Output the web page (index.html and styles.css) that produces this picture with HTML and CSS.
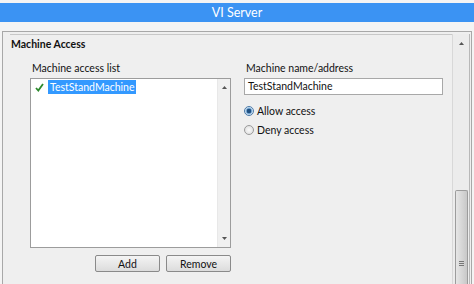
FILE: index.html
```html
<!DOCTYPE html>
<html>
<head>
<meta charset="utf-8">
<link rel="stylesheet" href="styles.css">
</head>
<body>
<div class="titlebar">VI Server</div>
<div class="window">
  <div class="frame">
    <div class="content">
      <div class="heading">Machine Access</div>
      <div class="cols">
        <div class="left">
          <div class="label">Machine access list</div>
          <div class="listbox">
            <div class="items">
              <div class="item">
                <svg class="check" width="9" height="9" viewBox="0 0 9 9"><path d="M1 5 L3.3 7.5 L8 1" fill="none" stroke="#2d8a2d" stroke-width="1.8"/></svg>
                <span class="sel">TestStandMachine</span>
              </div>
            </div>
            <div class="mini-scroll">
              <svg width="5" height="3" viewBox="0 0 5 3"><path d="M0 3 L2.5 0 L5 3Z" fill="#555"/></svg>
              <svg width="5" height="3" viewBox="0 0 5 3"><path d="M0 0 L2.5 3 L5 0Z" fill="#555"/></svg>
            </div>
          </div>
          <div class="buttons">
            <button class="btn">Add</button>
            <button class="btn">Remove</button>
          </div>
        </div>
        <div class="right">
          <div class="label">Machine name/address</div>
          <div class="input">TestStandMachine</div>
          <div class="radio-row first"><span class="radio on"></span>Allow access</div>
          <div class="radio-row"><span class="radio"></span>Deny access</div>
        </div>
      </div>
    </div>
    <div class="scrollbar">
      <svg class="arrow" width="5" height="3" viewBox="0 0 5 3"><path d="M0 3 L2.5 0 L5 3Z" fill="#555"/></svg>
      <div class="thumb"><span class="grip"></span></div>
    </div>
  </div>
</div>
</body>
</html>
```

FILE: styles.css
```css
* { box-sizing: border-box; }
html, body { margin: 0; padding: 0; }
body {
  width: 474px;
  height: 284px;
  overflow: hidden;
  background: #f4f4f4;
  font-family: "Lato", "Open Sans", sans-serif;
  font-size: 10.5px;
  color: #111;
}
.titlebar {
  margin-top: 3px;
  height: 19px;
  background: #3b93f3;
  color: #fff;
  font-size: 12.5px;
  text-align: center;
  line-height: 19px;
}
.window {
  padding: 9px 2px 0 2px;
  height: 262px;
}
.frame {
  display: flex;
  height: 100%;
  border: 1px solid #a8a8a8;
  border-bottom: none;
  background: #efefef;
  padding: 2px 1px 0 7px;
}
.content {
  flex: 1;
  border-top: 1px solid #c8c8c8;
  display: flex;
  flex-direction: column;
}
.heading {
  font-weight: bold;
  font-size: 10.5px;
  padding: 3px 0 0 1px;
  height: 26px;
}
.cols {
  display: flex;
  gap: 13px;
  padding-left: 20px;
}
.left { width: 201px; display: flex; flex-direction: column; }
.label { height: 17px; padding-left: 2px; line-height: 14px; }
.listbox {
  height: 170px;
  border: 1px solid #9c9c9c;
  background: #fff;
  display: flex;
}
.items { flex: 1; padding: 0 0 0 4px; }
.item { display: flex; align-items: center; height: 15px; gap: 4px; }
.check { margin-top: 1px; }
.sel {
  background: #3399ff;
  color: #fff;
  padding: 0 2px;
  line-height: 14px;
}
.mini-scroll {
  width: 13px;
  background: #f0f0f0;
  border-left: 1px solid #e8e8e8;
  display: flex;
  flex-direction: column;
  justify-content: space-between;
  align-items: center;
  padding: 7px 0 7px;
}
.buttons {
  display: flex;
  justify-content: flex-end;
  gap: 6px;
  margin-top: 7px;
}
.btn {
  width: 65px;
  height: 17px;
  border: 1px solid #8a8a8a;
  border-radius: 2px;
  background: linear-gradient(#f4f4f4, #dcdcdc);
  font-family: inherit;
  font-size: 10.5px;
  color: #111;
  padding: 0;
  line-height: 14px;
}
.right { width: 199px; display: flex; flex-direction: column; }
.input {
  height: 17px;
  border: 1px solid #a8a8a8;
  background: #fff;
  padding-left: 3px;
  line-height: 15px;
}
.radio-row {
  display: flex;
  align-items: center;
  gap: 3px;
  height: 19px;
}
.radio-row.first { margin-top: 6px; }
.radio {
  width: 10px;
  height: 10px;
  border-radius: 50%;
  border: 1px solid #9a9a9a;
  background: radial-gradient(#fafafa, #dadada);
}
.radio.on {
  background: radial-gradient(circle, #1f4f80 0 2px, #6aa0d0 2.5px, #e6eef6 4px);
  border-color: #4a79a8;
}
.scrollbar {
  width: 18px;
  border-left: 1px solid #d8d8d8;
  border-right: 1px solid #b8b8b8;
  background: #ececec;
  display: flex;
  flex-direction: column;
  align-items: center;
  padding-top: 8px;
}
.arrow { flex: none; }
.thumb {
  margin-top: 145px;
  width: 13px;
  flex: 1;
  border: 1px solid #9c9c9c;
  border-bottom: none;
  border-radius: 2px 2px 0 0;
  background: linear-gradient(90deg, #e6e6e6, #d4d4d4 60%, #c8c8c8);
  display: flex;
  justify-content: center;
  padding-top: 70px;
}
.grip {
  width: 5px;
  height: 5px;
  background: repeating-linear-gradient(#777 0 1px, transparent 1px 2px);
}
```
